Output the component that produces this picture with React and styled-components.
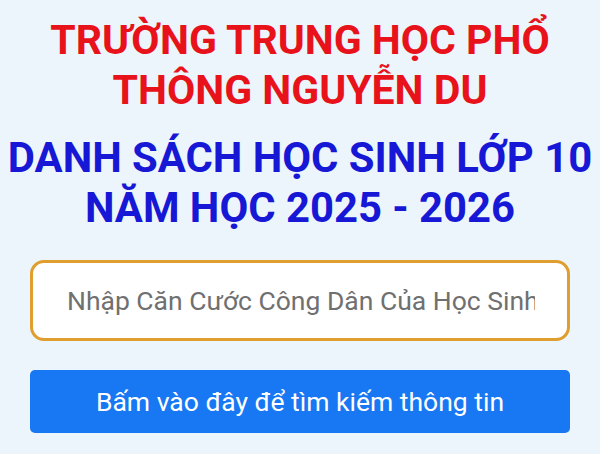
import React from 'react';
import styled, { createGlobalStyle } from 'styled-components';

const GlobalStyle = createGlobalStyle`
  html, body {
    margin: 0;
    padding: 0;
    background: #edf5fc;
    font-family: Roboto, "Noto Sans", "Liberation Sans", sans-serif;
  }
`;

const Page = styled.div`
  display: flex;
  flex-direction: column;
  align-items: center;
  padding: 15px 30px 0;
  min-height: 100vh;
  box-sizing: border-box;
`;

const Title = styled.h1`
  margin: ${(p) => p.$top || 0}px -30px 0;
  font-size: ${(p) => p.$size || 41}px;
  line-height: 50px;
  font-weight: 700;
  text-align: center;
  white-space: nowrap;
  color: ${(p) => p.$color};
`;

const SearchInput = styled.input`
  box-sizing: border-box;
  width: 540px;
  height: 81px;
  margin-top: 27px;
  padding: 0 32px 0 34px;
  border: 3px solid #e09e2e;
  border-radius: 14px;
  background: #fff;
  font-family: inherit;
  font-size: 26.5px;
  color: #333;
  outline: none;
  caret-color: #222;

  &::placeholder {
    color: #707070;
  }
`;

const SearchButton = styled.button`
  box-sizing: border-box;
  width: 540px;
  height: 63px;
  margin-top: 29px;
  border: none;
  border-radius: 5px;
  background: #1877f2;
  color: #fff;
  font-family: inherit;
  font-size: 26.5px;
  cursor: pointer;
`;

export default function App() {
  return (
    <>
      <GlobalStyle />
      <Page>
        <Title $color="#e8121b">
          TRƯỜNG TRUNG HỌC PHỔ
          <br />
          THÔNG NGUYỄN DU
        </Title>
        <Title $color="#1717d6" $top={18} $size={41.8}>
          DANH SÁCH HỌC SINH LỚP 10
          <br />
          NĂM HỌC 2025 - 2026
        </Title>
        <SearchInput autoFocus placeholder="Nhập Căn Cước Công Dân Của Học Sinh" />
        <SearchButton>Bấm vào đây để tìm kiếm thông tin</SearchButton>
      </Page>
    </>
  );
}
